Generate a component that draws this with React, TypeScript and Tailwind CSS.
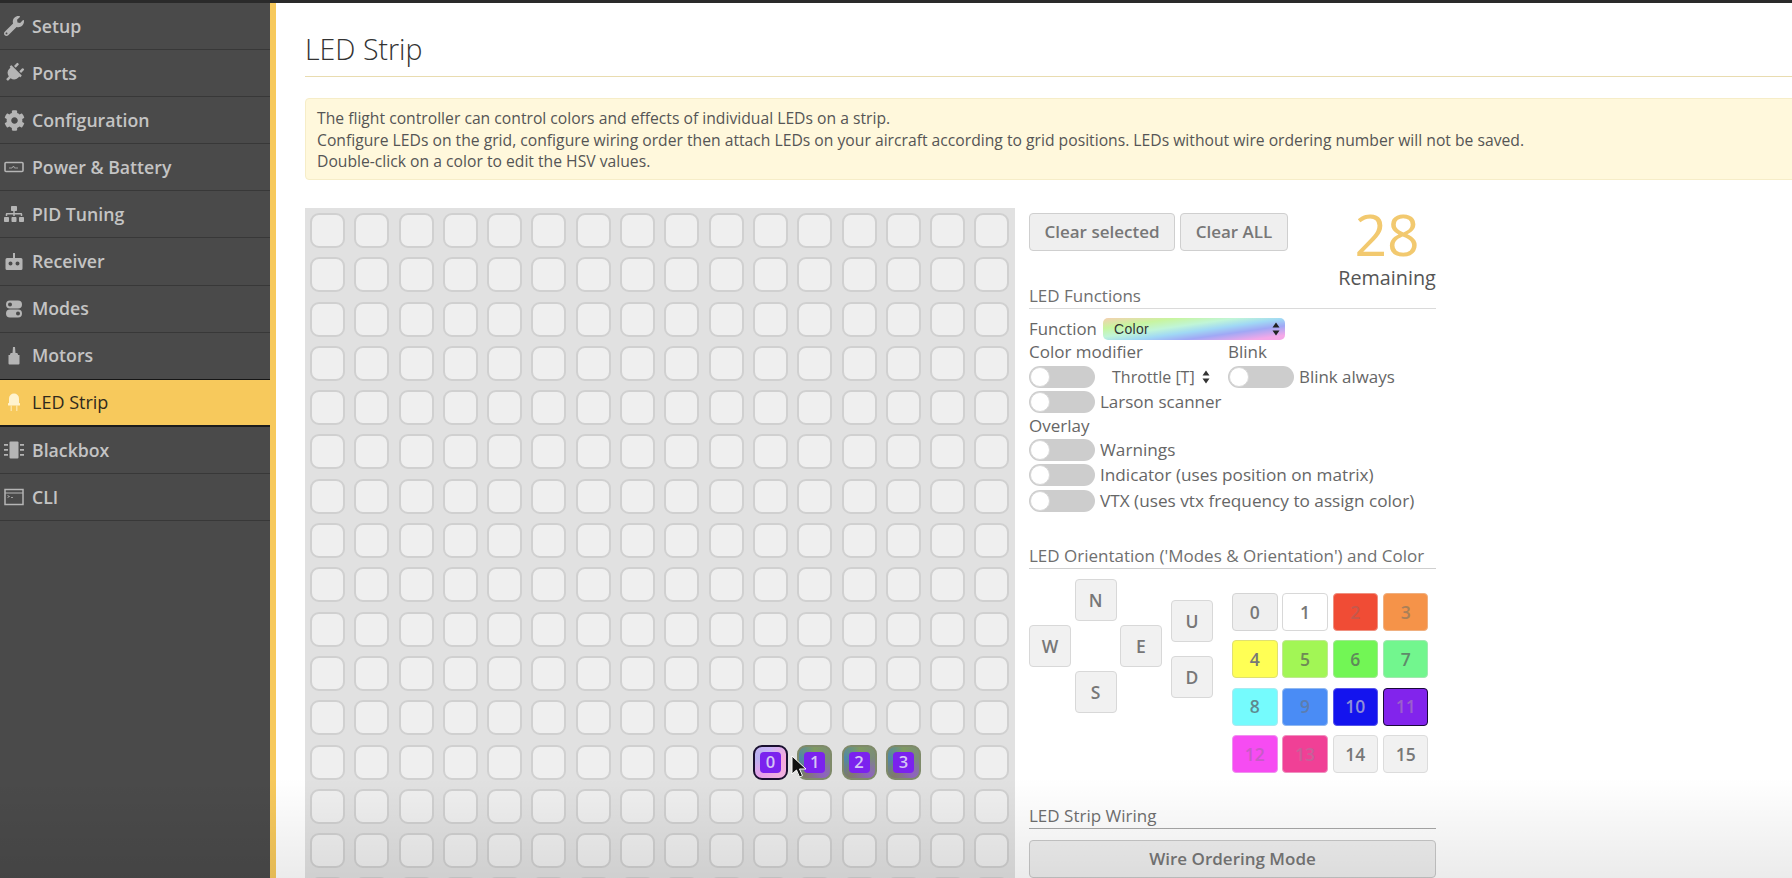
import { FaCog, FaPlug, FaSitemap, FaWrench } from 'react-icons/fa'

function PowerIcon() {
  return (
    <svg width="20" height="20" viewBox="0 0 20 20" fill="none" stroke="currentColor">
      <rect x="1" y="5.5" width="18" height="9" rx="1" strokeWidth="1.6" />
      <path d="M5 11h3l1.5-2 1 2H14" strokeWidth="0.8" />
    </svg>
  )
}

function ReceiverIcon() {
  return (
    <svg width="20" height="20" viewBox="0 0 20 20" fill="currentColor">
      <rect x="9" y="1" width="2" height="6" />
      <path fillRule="evenodd" d="M3 6h14a1.5 1.5 0 0 1 1.5 1.5v9A1.5 1.5 0 0 1 17 18H3a1.5 1.5 0 0 1-1.5-1.5v-9A1.5 1.5 0 0 1 3 6zm3.5 3.5a2 2 0 1 0 0 4 2 2 0 0 0 0-4zm7 0a2 2 0 1 0 0 4 2 2 0 0 0 0-4z" />
    </svg>
  )
}

function ModesIcon() {
  return (
    <svg width="20" height="20" viewBox="0 0 20 20" fill="currentColor">
      <path fillRule="evenodd" d="M6 1.5h8a4 4 0 0 1 0 8H6a4 4 0 0 1 0-8zm0 2a2 2 0 1 0 0 4 2 2 0 0 0 0-4z" />
      <path fillRule="evenodd" d="M6 10.5h8a4 4 0 0 1 0 8H6a4 4 0 0 1 0-8zm8 2a2 2 0 1 0 0 4 2 2 0 0 0 0-4z" />
    </svg>
  )
}

function MotorsIcon() {
  return (
    <svg width="20" height="20" viewBox="0 0 20 20" fill="currentColor">
      <path d="M9 1h2l.5 6H13a2 2 0 0 1 1 2h1.500v8.500a1 1 0 0 1-1 1h-9a1 1 0 0 1-1-1V9H6a2 2 0 0 1 1-2h1.500z" />
    </svg>
  )
}

function LedIcon() {
  return (
    <svg width="20" height="20" viewBox="0 0 20 20" fill="currentColor">
      <path d="M5 6.500a5 5 0 0 1 10 0V12H5z" />
      <rect x="4" y="11" width="12" height="2.500" rx="0.500" />
      <rect x="6.500" y="13.500" width="1.500" height="5.500" opacity="0.6" />
      <rect x="12" y="13.500" width="1.500" height="5.500" opacity="0.6" />
    </svg>
  )
}

function BlackboxIcon() {
  return (
    <svg width="20" height="20" viewBox="0 0 20 20" fill="currentColor">
      <rect x="5.500" y="1.500" width="9" height="17" rx="1" />
      <path d="M0 4h4v1.800H0zM0 9h4v1.800H0zM0 14h4v1.800H0zM16 4h4v1.800h-4zM16 9h4v1.800h-4zM16 14h4v1.800h-4z" />
    </svg>
  )
}

function CliIcon() {
  return (
    <svg width="20" height="20" viewBox="0 0 20 20" fill="none" stroke="currentColor">
      <rect x="1" y="2.500" width="18" height="15" strokeWidth="1.500" />
      <path d="M1 6h18" strokeWidth="1" />
      <path d="M3.500 8.500l2 1-2 1M7 10.500h2" strokeWidth="0.800" />
    </svg>
  )
}

const NAV = [
  { label: 'Setup', icon: <FaWrench size={20} /> },
  { label: 'Ports', icon: <FaPlug size={20} className="rotate-45" /> },
  { label: 'Configuration', icon: <FaCog size={21} /> },
  { label: 'Power & Battery', icon: <PowerIcon /> },
  { label: 'PID Tuning', icon: <FaSitemap size={20} /> },
  { label: 'Receiver', icon: <ReceiverIcon /> },
  { label: 'Modes', icon: <ModesIcon /> },
  { label: 'Motors', icon: <MotorsIcon /> },
  { label: 'LED Strip', icon: <LedIcon />, active: true },
  { label: 'Blackbox', icon: <BlackboxIcon /> },
  { label: 'CLI', icon: <CliIcon /> },
]

const COLORS = [
  { n: 0, cls: 'bg-[#efefef] border-[#d4d4d4] text-[#777]' },
  { n: 1, cls: 'bg-[#ffffff] border-[#d8d8d8] text-[#777]' },
  { n: 2, cls: 'bg-[#f04c35] border-[#f09080] text-[#c4594c]' },
  { n: 3, cls: 'bg-[#f59349] border-[#f0b080] text-[#a98058]' },
  { n: 4, cls: 'bg-[#ffff55] border-[#e0e070] text-[#777]' },
  { n: 5, cls: 'bg-[#a2f655] border-[#c0e890] text-[#6f8a55]' },
  { n: 6, cls: 'bg-[#72f655] border-[#a0e890] text-[#5f8a5a]' },
  { n: 7, cls: 'bg-[#72f68e] border-[#a0e8b0] text-[#5f8a6a]' },
  { n: 8, cls: 'bg-[#75fbfd] border-[#a8eaf0] text-[#5f8a8f]' },
  { n: 9, cls: 'bg-[#4a8cf5] border-[#90b8f0] text-[#5d7dae]' },
  { n: 10, cls: 'bg-[#1414ee] border-[#5555e8] text-[#8f8fd8]' },
  { n: 11, cls: 'bg-[#8224ec] border-[#1a0a3a] text-[#9a60cc]' },
  { n: 12, cls: 'bg-[#f64cf2] border-[#f090f0] text-[#c85ac8]' },
  { n: 13, cls: 'bg-[#f04096] border-[#f090c0] text-[#c8609a]' },
  { n: 14, cls: 'bg-[#f1f1f1] border-[#dcdcdc] text-[#777]' },
  { n: 15, cls: 'bg-[#f1f1f1] border-[#dcdcdc] text-[#777]' },
]

const ROWS = 16
const COLS = 16
const LED_ROW = 12
const LED_START = 10

function Toggle() {
  return (
    <span className="relative block w-[66px] h-[22px] rounded-full bg-[#cdcdcd] shrink-0">
      <span className="absolute left-[1px] top-[1px] w-[20px] h-[20px] rounded-full bg-white border border-[#d8d8d8]" />
    </span>
  )
}

function SelectArrows({ className }: { className: string }) {
  return (
    <svg width="8" height="14" viewBox="0 0 8 14" className={className} fill="currentColor">
      <path d="M4 0.500L7.500 5.500H0.500zM4 13.500L0.500 8.500H7.500z" />
    </svg>
  )
}

function SectionTitle({ children, className }: { children: React.ReactNode; className: string }) {
  return <div className={`text-[17px] leading-[24px] text-[#6f6f6f] whitespace-nowrap border-b ${className}`}>{children}</div>
}

function DirButton({ label }: { label: string }) {
  return (
    <div className="w-[42px] h-[42px] rounded-[4px] bg-[#f1f1f1] border border-[#d8d8d8] flex items-center justify-center text-[17.5px] font-semibold text-[#777]">
      {label}
    </div>
  )
}

function LedCell({ row, col }: { row: number; col: number }) {
  const idx = row === LED_ROW ? col - LED_START : -1
  if (idx < 0 || idx > 3) {
    return <div className="w-[35px] h-[35px] rounded-[9px] bg-[#efefef] border-2 border-[#d0d0d0]" />
  }
  const bg = idx === 0
    ? 'border-[#1a1030] bg-[conic-gradient(#c9b5f5,#f5a8dc,#f0b0e0,#e8a0e8,#b9b0f0,#c9b5f5)]'
    : 'border-[#7f8a6a] bg-[conic-gradient(#7f9a62,#7a8a7a,#8f62c0,#7f7a6a,#4f88a8,#7f9a62)]'
  return (
    <div className={`w-[35px] h-[35px] rounded-[9px] border-2 flex items-center justify-center ${bg}`}>
      <div className="w-[21px] h-[21px] rounded-[4px] bg-[#7b22ee] flex items-center justify-center text-[16.5px] font-semibold text-[#d5c5f5]">
        {idx}
      </div>
    </div>
  )
}

export default function App() {
  return (
    <div className="relative w-[1792px] h-[878px] overflow-hidden flex bg-white font-['Open_Sans','Liberation_Sans',sans-serif]">
      {/* Menu */}
      <div className="w-[276px] shrink-0 flex flex-col bg-[#f7c95c] border-t-[3px] border-[#2a2a2a]">
        <div className="w-[270px] h-full bg-[#4a4a4a] flex flex-col">
          {NAV.map(item => (
            <div
              key={item.label}
              className={item.active
                ? 'h-[47.1px] flex items-center bg-[#f7c95c] text-[#2f2a1c] border-b-2 border-[#1c1c1c]'
                : `h-[47.1px] flex items-center text-[#c4c4c4] border-b ${item.label === 'Motors' ? 'border-[#151515]' : 'border-[#383838]'}`}
            >
              <span className={`w-[32px] pl-[4px] shrink-0 flex items-center ${item.active ? 'text-[#fff3cf]' : 'text-[#b5b5b5]'}`}>
                {item.icon}
              </span>
              <span className={item.active ? 'text-[18px]' : 'text-[17.7px] font-semibold'}>{item.label}</span>
            </div>
          ))}
        </div>
      </div>

      {/* Content */}
      <div className="flex-1 min-w-0 pl-[29px] border-t-[3px] border-[#2a2a2a]">
        <h1 className="h-[74px] pt-[26px] text-[28.5px] leading-[40px] font-light text-[#333] border-b border-[#e9dcb0]">
          LED Strip
        </h1>
        <div className="mt-[21px] -mr-[10px] h-[82px] px-[11px] py-[9px] bg-[#fff8dc] border border-[#f6edc8] rounded-l-[4px] text-[15.7px] leading-[21.6px] text-[#555]">
          <p>The flight controller can control colors and effects of individual LEDs on a strip.</p>
          <p>Configure LEDs on the grid, configure wiring order then attach LEDs on your aircraft according to grid positions. LEDs without wire ordering number will not be saved.</p>
          <p>Double-click on a color to edit the HSV values.</p>
        </div>

        <div className="mt-[28px] flex items-start">
          {/* LED grid */}
          <div className="w-[710px] shrink-0 bg-[#e1e1e1] p-[5px] grid grid-cols-[repeat(16,35px)] gap-[9.3px]">
            {Array.from({ length: ROWS * COLS }, (_, i) => (
              <LedCell key={i} row={Math.floor(i / COLS)} col={i % COLS} />
            ))}
          </div>

          {/* Controls */}
          <div className="ml-[14px] w-[407px] shrink-0 pt-[5px]">
            <div className="flex">
              <div className="flex gap-[5px]">
                <div className="w-[146px] h-[38px] rounded-[4px] bg-[#efefef] border border-[#cfcfcf] flex items-center justify-center text-[17px] font-semibold text-[#777]">
                  Clear selected
                </div>
                <div className="w-[108px] h-[38px] rounded-[4px] bg-[#efefef] border border-[#cfcfcf] flex items-center justify-center text-[17px] font-semibold text-[#777]">
                  Clear ALL
                </div>
              </div>
              <div className="ml-auto w-[98px] text-center">
                <div className="h-[50px] text-[57px] leading-[42px] text-[#f2c96f]">28</div>
                <div className="mt-[3px] text-[19.8px] leading-[24px] text-[#555]">Remaining</div>
              </div>
            </div>

            <SectionTitle className="-mt-[6px] h-[25px] border-[#dadada]">LED Functions</SectionTitle>

            <div className="mt-[9px] flex items-center h-[22px] text-[16.8px] text-[#666]">
              <span className="w-[74px]">Function</span>
              <div className="relative w-[182px] h-[22px] rounded-[5px] pl-[11px] flex items-center text-[14px] tracking-[0.3px] text-[#333] font-['Liberation_Sans',sans-serif] bg-[linear-gradient(172deg,#f5d0b0_0%,#c8f5a0_22%,#c0f5d8_40%,#a0d8f5_55%,#a0a8f5_70%,#f5a8e8_90%)]">
                Color
                <SelectArrows className="absolute right-[5px] top-[4px] text-[#222]" />
              </div>
            </div>

            <div className="flex h-[24px] items-center text-[17px] text-[#666]">
              <span className="w-[199px]">Color modifier</span>
              <span>Blink</span>
            </div>
            <div className="flex items-center h-[25px] text-[16.9px] text-[#666]">
              <Toggle />
              <span className="ml-[17px] w-[90px] whitespace-nowrap text-[16px]">Throttle [T]</span>
              <SelectArrows className="text-[#333]" />
              <span className="ml-[18px]"><Toggle /></span>
              <span className="ml-[5px]">Blink always</span>
            </div>
            <div className="flex items-center gap-[5px] h-[25px] text-[17px] text-[#666]">
              <Toggle />
              <span>Larson scanner</span>
            </div>
            <div className="h-[23px] flex items-center text-[17px] text-[#666]">Overlay</div>
            {['Warnings', 'Indicator (uses position on matrix)', 'VTX (uses vtx frequency to assign color)'].map(label => (
              <div key={label} className="flex items-center gap-[5px] h-[25.5px] text-[17.2px] text-[#666] whitespace-nowrap">
                <Toggle />
                <span>{label}</span>
              </div>
            ))}

            <SectionTitle className="mt-[30.5px] h-[25px] border-[#cfcfcf] text-[17.2px]">LED Orientation ('Modes &amp; Orientation') and Color</SectionTitle>

            <div className="mt-[10px] flex items-start">
              <div className="grid grid-cols-[repeat(3,42px)] gap-x-[3.5px] gap-y-[4px]">
                <div />
                <DirButton label="N" />
                <div />
                <DirButton label="W" />
                <div />
                <DirButton label="E" />
                <div />
                <DirButton label="S" />
              </div>
              <div className="ml-[9px] mt-[21px] flex flex-col gap-[14px]">
                <DirButton label="U" />
                <DirButton label="D" />
              </div>
              <div className="ml-[19px] mt-[14px] grid grid-cols-[repeat(4,45.5px)] gap-x-[4.8px] gap-y-[9.3px]">
                {COLORS.map(c => (
                  <div key={c.n} className={`h-[38px] rounded-[4px] border flex items-center justify-center text-[17.5px] font-semibold ${c.cls}`}>
                    {c.n}
                  </div>
                ))}
              </div>
            </div>

            <SectionTitle className="mt-[31px] h-[25px] border-[#a8a8a8]">LED Strip Wiring</SectionTitle>
            <div className="mt-[11px] h-[38px] rounded-[4px] bg-[#efefef] border border-[#c8c8c8] flex items-center justify-center text-[17px] font-semibold text-[#777]">
              Wire Ordering Mode
            </div>
          </div>
        </div>
      </div>

      {/* Mouse cursor over the LED grid */}
      <svg width="16" height="24" viewBox="0 0 16 24" className="absolute left-[791px] top-[755px]">
        <path d="M1 1v18l4.500-4 3 7 3-1.300-3-6.700H15z" fill="#111" stroke="#fff" strokeWidth="1" />
      </svg>

      {/* Video player shade at the bottom */}
      <div className="absolute left-0 right-0 bottom-0 h-[100px] pointer-events-none bg-[linear-gradient(to_bottom,rgba(0,0,0,0),rgba(0,0,0,0.08))]" />
    </div>
  )
}
